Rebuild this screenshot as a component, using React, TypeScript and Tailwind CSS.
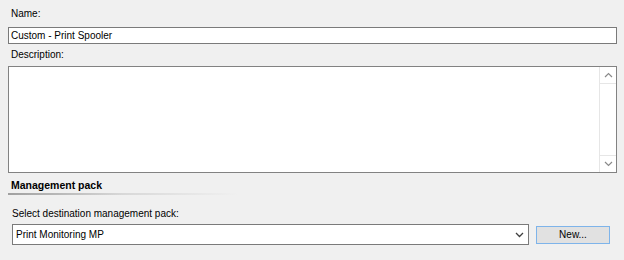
import React from "react";

export default function App() {
  return (
    <div
      className="w-[624px] h-[260px] bg-[#f0f0f0] text-[10px] text-[#000] overflow-hidden"
      style={{ fontFamily: '"Liberation Sans", Arial, sans-serif' }}
    >
      <div className="flex flex-col pl-[8px] pr-[7px] pt-[7px]">
        <div className="pl-[3px] h-[14px] leading-[14px]">Name:</div>
        <div className="mt-[6px] h-[17px] border border-[#7a7a7a] bg-white pl-[2px] leading-[15px]">
          Custom - Print Spooler
        </div>
        <div className="mt-[4px] pl-[3px] h-[14px] leading-[14px]">Description:</div>
        <div className="mt-[4px] h-[107px] border border-[#828282] bg-white flex justify-end">
          <div className="w-[17px] h-full flex flex-col bg-white border-l border-[#e6e6e6]">
            <div className="h-[17px] flex items-center justify-center border-b border-[#e6e6e6]">
              <svg width="9" height="6" viewBox="0 0 9 6">
                <path d="M1 5 L4.5 1.5 L8 5" fill="none" stroke="#8a8a8a" strokeWidth="1.2" />
              </svg>
            </div>
            <div className="flex-1" />
            <div className="h-[17px] flex items-center justify-center border-t border-[#e6e6e6]">
              <svg width="9" height="6" viewBox="0 0 9 6">
                <path d="M1 1 L4.5 4.5 L8 1" fill="none" stroke="#8a8a8a" strokeWidth="1.2" />
              </svg>
            </div>
          </div>
        </div>
        <div className="mt-[5px] pl-[3px] h-[14px] leading-[14px] font-bold text-[10.5px]">Management pack</div>
        <div className="mt-[1px] h-[2px] w-[230px] bg-gradient-to-r from-[#a0a0a0] via-[#d8d8d8] to-transparent" />
        <div className="mt-[12px] pl-[4px] h-[14px] leading-[14px]">Select destination management pack:</div>
        <div className="mt-[3px] flex items-center pl-[4px]">
          <div className="w-[517px] h-[21px] border border-[#7a7a7a] bg-white flex items-center justify-between pl-[3px] pr-[4px]">
            <span>Print Monitoring MP</span>
            <svg width="9" height="6" viewBox="0 0 9 6">
              <path d="M1 1 L4.5 4.5 L8 1" fill="none" stroke="#404040" strokeWidth="1.3" />
            </svg>
          </div>
          <div className="ml-[7px] w-[74px] h-[18px] border border-[#7eb4ea] bg-[#e1e1e1] flex items-center justify-center">
            New...
          </div>
        </div>
      </div>
    </div>
  );
}
